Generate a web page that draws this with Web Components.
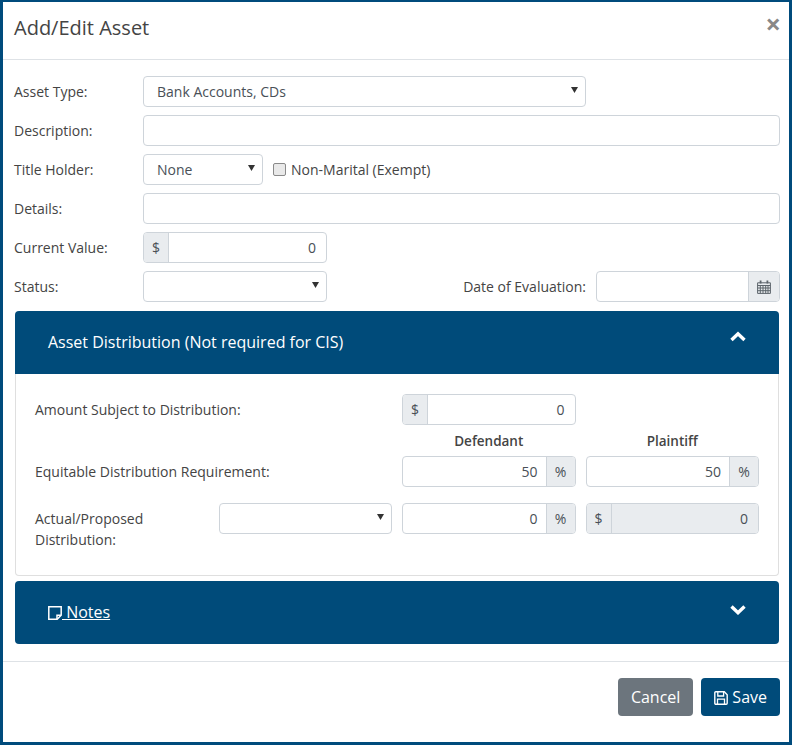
<!DOCTYPE html>
<html>
<head>
<meta charset="utf-8">
<title>Add/Edit Asset</title>
<style>
  html, body { margin: 0; background: #fff; }
  body { font: 14px/21px "Open Sans", "Liberation Sans", sans-serif; color: #495057; }
</style>
</head>
<body>
<asset-modal>
  <span slot="title">Add/Edit Asset</span>

  <form-row label="Asset Type:">
    <ui-select style="width:443px" value="Bank Accounts, CDs"></ui-select>
  </form-row>
  <form-row label="Description:"><ui-input style="flex:1"></ui-input></form-row>
  <form-row label="Title Holder:">
    <ui-select style="width:120px" value="None"></ui-select>
    <ui-check>Non-Marital (Exempt)</ui-check>
  </form-row>
  <form-row label="Details:"><ui-input style="flex:1"></ui-input></form-row>
  <form-row label="Current Value:">
    <ui-input style="width:184px" before="$" value="0"></ui-input>
  </form-row>
  <form-row label="Status:">
    <ui-select style="width:184px"></ui-select>
    <span class="date-label" style="margin-left:auto;margin-right:10px">Date of Evaluation:</span>
    <ui-input style="width:184px" icon="calendar"></ui-input>
  </form-row>

  <ui-panel open style="margin-top:9px">
    <span slot="title">Asset Distribution (Not required for CIS)</span>
    <dist-grid></dist-grid>
  </ui-panel>
  <ui-panel style="margin-top:5px">
    <span slot="title" style="text-decoration:underline"><svg width="14" height="14" viewBox="0 0 14 14" style="vertical-align:-2px"><path d="M.8.8h12.400v8.400l-4 4H.8z" fill="none" stroke="#fff" stroke-width="1.500"/><path d="M9 13v-3.800h4" fill="none" stroke="#fff" stroke-width="1.500"/></svg> Notes</span>
  </ui-panel>

  <ui-button slot="footer" kind="cancel">Cancel</ui-button>
  <ui-button slot="footer" kind="save"><svg width="14" height="14" viewBox="0 0 14 14" style="vertical-align:-2px;margin-right:4px"><path d="M1.800 .8h8.500l2.900 2.900v8.500a1 1 0 0 1-1 1H1.800a1 1 0 0 1-1-1V1.800a1 1 0 0 1 1-1z" fill="none" stroke="#fff" stroke-width="1.400"/><path d="M3.800 1v4h5.800V1M3.500 13V8.200h7V13" fill="none" stroke="#fff" stroke-width="1.300"/></svg>Save</ui-button>
</asset-modal>

<script>
class AssetModal extends HTMLElement {
  constructor() {
    super();
    this.attachShadow({ mode: "open" }).innerHTML = `
    <style>
      :host { display: flex; flex-direction: column; box-sizing: border-box; height: 745px; width: 792px;
        border: solid #004b7c; border-width: 2px 3px 3px 3px; background: #fff; }
      header { flex: none; height: 57px; border-bottom: 1px solid #dee2e6; display: flex; justify-content: space-between; padding: 0 8px 0 11px; }
      h1 { margin: 0; font-size: 20px; font-weight: 400; line-height: 52px; color: #444; }
      .close { font-size: 27px; font-weight: 700; color: #888; line-height: 44px; }
      main { flex: 1; min-height: 0; padding: 16px 9px 17px 11px; }
      footer { flex: none; box-sizing: border-box; height: 81px; border-top: 1px solid #dee2e6; padding-top: 16px; padding-right: 9px;
        display: flex; justify-content: flex-end; align-items: flex-start; gap: 8px; }
    </style>
    <header><h1><slot name="title"></slot></h1><span class="close">×</span></header>
    <main><slot></slot></main>
    <footer><slot name="footer"></slot></footer>`;
  }
}

class FormRow extends HTMLElement {
  constructor() {
    super();
    this.attachShadow({ mode: "open" }).innerHTML = `
    <style>
      :host { display: flex; align-items: center; height: 31px; margin-bottom: 8px; color: #444; }
      label { width: 129px; flex: none; }
      :host(:last-of-type) { margin-bottom: 0; }
    </style>
    <label></label><slot></slot>`;
    this.shadowRoot.querySelector("label").textContent = this.getAttribute("label");
  }
}

class UiSelect extends HTMLElement {
  constructor() {
    super();
    this.attachShadow({ mode: "open" }).innerHTML = `
    <style>
      :host { display: flex; align-items: center; justify-content: space-between; box-sizing: border-box; height: 31px;
        border: 1px solid #ced4da; border-radius: 4px; padding: 0 7px 0 13px; background: #fff; color: #495057; }
      svg { margin-top: -3px; flex: none; }
    </style>
    <span></span>
    <svg width="7" height="6" viewBox="0 0 7 6"><path d="M0 0h7L3.500 6z" fill="#333"/></svg>`;
    this.shadowRoot.querySelector("span").textContent = this.getAttribute("value") || "";
  }
}

const CALENDAR = `<svg width="14" height="14" viewBox="0 0 14 14"><path d="M.6 2.800h12.800v10.600H.6zM.6 5.500h12.800M.6 8h12.800M.6 10.700h12.800M3.300 5.500v7.900M6 5.500v7.900M8.700 5.500v7.900M11 5.500v7.900" fill="none" stroke="#5c646b" stroke-width="1"/><path d="M3.600 .6v3M10.400 .6v3" stroke="#5c646b" stroke-width="1.800"/></svg>`;

class UiInput extends HTMLElement {
  constructor() {
    super();
    var before = this.getAttribute("before");
    var after = this.getAttribute("after");
    var icon = this.getAttribute("icon");
    var value = this.getAttribute("value") || "";
    this.attachShadow({ mode: "open" }).innerHTML = `
    <style>
      :host { display: flex; box-sizing: border-box; height: 31px; border: 1px solid #ced4da; border-radius: 4px; background: #fff; overflow: hidden; color: #495057; }
      :host([disabled]) .val { background: #e9ecef; }
      .val { flex: 1; text-align: right; padding: 0 10px; line-height: 29px; }
      :host([after]) .val { padding-right: 8px; }
      .add { background: #e9ecef; display: flex; align-items: center; justify-content: center; flex: none; }
      .pre { width: 24px; border-right: 1px solid #ced4da; }
      .post { width: 28px; border-left: 1px solid #ced4da; }
      .cal { width: 30px; border-left: 1px solid #ced4da; }
    </style>
    ${before ? `<span class="add pre">${before}</span>` : ""}
    <span class="val">${value}</span>
    ${after ? `<span class="add post">${after}</span>` : ""}
    ${icon ? `<span class="add cal">${CALENDAR}</span>` : ""}`;
  }
}

class UiCheck extends HTMLElement {
  constructor() {
    super();
    this.attachShadow({ mode: "open" }).innerHTML = `
    <style>
      :host { display: flex; align-items: center; margin-left: 10px; color: #444; }
      i { width: 11px; height: 11px; border: 1px solid #8a8a8a; border-radius: 2px; background: #e9e9e9; margin-right: 5px; }
    </style>
    <i></i><slot></slot>`;
  }
}

class UiPanel extends HTMLElement {
  constructor() {
    super();
    var open = this.hasAttribute("open");
    var chevron = open ? "M1.500 9L8 2.800 14.500 9" : "M1.500 2.500L8 8.700 14.500 2.500";
    this.attachShadow({ mode: "open" }).innerHTML = `
    <style>
      :host { display: block; margin-left: 1px; margin-right: 1px; border-radius: 4px; }
      .head { height: 63px; background: #004b7a; color: #fff; border-radius: 4px 4px 0 0; display: flex; justify-content: space-between;
        padding: 0 33px 0 33px; font-size: 16px; font-weight: 500; }
      :host(:not([open])) .head { border-radius: 4px; }
      .title { line-height: 63px; }
      svg { margin-top: 20px; }
      :host(:not([open])) svg { margin-top: 23px; }
      .body { border: 1px solid #dfdfdf; border-top: 0; border-radius: 0 0 4px 4px; }
    </style>
    <div class="head"><span class="title"><slot name="title"></slot></span>
    <svg width="16" height="11" viewBox="0 0 16 11"><path d="${chevron}" fill="none" stroke="#fff" stroke-width="3.400"/></svg></div>
    ${open ? `<div class="body"><slot></slot></div>` : ""}`;
  }
}

class DistGrid extends HTMLElement {
  constructor() {
    super();
    this.attachShadow({ mode: "open" }).innerHTML = `
    <style>
      :host { display: grid; grid-template-columns: repeat(4, 1fr); column-gap: 10px; padding: 20px 19px 41px;
        grid-template-rows: 31px 31px 31px 47px; color: #444; align-items: center; }
      .wide { grid-column: span 2; }
      .h { font-weight: 600; font-size: 13.5px; text-align: center; padding-top: 1px; }
      .mt { align-self: start; margin-top: 16px; }
      .lab { align-self: start; margin-top: 21px; }
    </style>
    <span class="wide">Amount Subject to Distribution:</span>
    <ui-input before="$" value="0"></ui-input><span></span>
    <span class="wide"></span><span class="h">Defendant</span><span class="h">Plaintiff</span>
    <span class="wide">Equitable Distribution Requirement:</span>
    <ui-input after="%" value="50"></ui-input><ui-input after="%" value="50"></ui-input>
    <span class="lab">Actual/Proposed<br>Distribution:</span>
    <ui-select class="mt"></ui-select>
    <ui-input class="mt" after="%" value="0"></ui-input>
    <ui-input class="mt" before="$" value="0" disabled></ui-input>`;
  }
}

class UiButton extends HTMLElement {
  constructor() {
    super();
    this.attachShadow({ mode: "open" }).innerHTML = `
    <style>
      :host { display: block; height: 38px; box-sizing: border-box; border-radius: 4px; color: #fff; font-size: 16px; line-height: 39px; padding: 0 13px; }
      :host([kind=cancel]) { background: #6c757d; }
      :host([kind=save]) { background: #004b7a; }
    </style>
    <slot></slot>`;
  }
}

customElements.define("asset-modal", AssetModal);
customElements.define("form-row", FormRow);
customElements.define("ui-select", UiSelect);
customElements.define("ui-input", UiInput);
customElements.define("ui-check", UiCheck);
customElements.define("ui-panel", UiPanel);
customElements.define("dist-grid", DistGrid);
customElements.define("ui-button", UiButton);
</script>
</body>
</html>
